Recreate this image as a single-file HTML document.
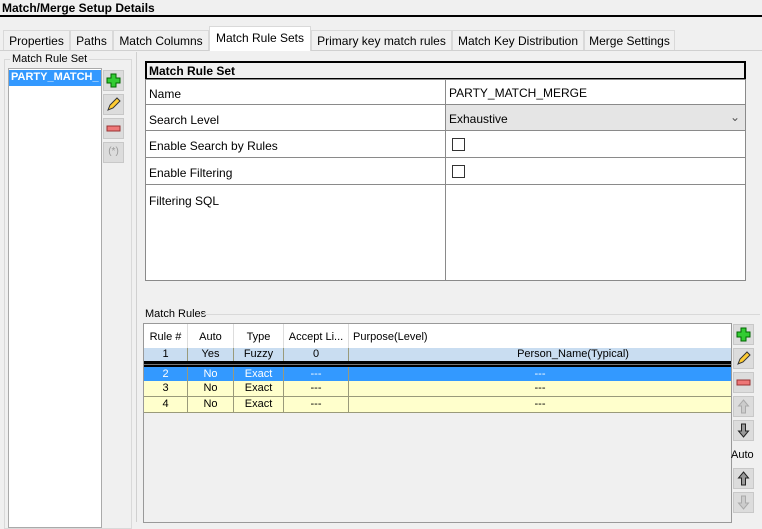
<!DOCTYPE html>
<html><head><style>
*{box-sizing:border-box;margin:0;padding:0}
body{width:762px;height:522px;background:#f0f0f0;font-family:"Liberation Sans",sans-serif;font-size:12px;color:#000;position:relative;overflow:hidden}
.a{position:absolute}
.tab{position:absolute;top:30px;height:20px;border:1px solid #d9d9d9;border-bottom:none;background:#f0f0f0;font-size:12px;padding:3px 0 0 0;text-align:center}
.cell{position:absolute;border:1px solid #8a8a8a;background:#fff;padding:4px 3px;font-size:12px}
.btn{position:absolute;width:21px;height:21px;background:#dcdcdc;border:1px solid #c8c8c8}
.tr{position:absolute;left:144px;width:587px;font-size:11px}
.tr div{position:absolute;top:0;height:100%;text-align:center;border-right:1px solid #9a9a7a}
.cb{position:absolute;width:13px;height:13px;border:1px solid #333;background:#fff}
</style></head><body>
<div class="a" style="left:0;top:0;width:762px;height:17px;border-bottom:2px solid #000;font-weight:bold;font-size:12px;padding:1px 2px">Match/Merge Setup Details</div>
<div class="a" style="left:0;top:50px;width:762px;height:1px;background:#d0d0d0"></div>
<div class="tab" style="left:3px;width:67px">Properties</div>
<div class="tab" style="left:70px;width:43px">Paths</div>
<div class="tab" style="left:113px;width:96px">Match Columns</div>
<div class="tab" style="left:209px;top:26px;height:25px;width:102px;background:#fff;padding-top:4px">Match Rule Sets</div>
<div class="tab" style="left:311px;width:141px">Primary key match rules</div>
<div class="tab" style="left:452px;width:132px">Match Key Distribution</div>
<div class="tab" style="left:584px;width:91px">Merge Settings</div>
<div class="a" style="left:4px;top:59px;width:128px;height:470px;border:1px solid #d9d9d9"></div>
<div class="a" style="left:10px;top:53px;padding:0 2px;background:#f0f0f0;font-size:11px">Match Rule Set</div>
<div class="a" style="left:8px;top:68px;width:94px;height:460px;background:#fff;border:1px solid #aaa"></div>
<div class="a" style="left:9px;top:70px;width:92px;height:16px;background:#3399ff;color:#fff;font-weight:bold;font-size:11px;padding:1px 2px;overflow:hidden;white-space:nowrap">PARTY_MATCH_</div>
<div class="btn" style="left:103px;top:70px"><svg width="19" height="19"><path d="M7 3h5v4h4v5h-4v4H7v-4H3V7h4z" fill="#3c3" stroke="#060" stroke-width="1"/></svg></div>
<div class="btn" style="left:103px;top:94px"><svg width="19" height="19"><path d="M4 15l2-5 7-7 3 3-7 7z" fill="#fc3" stroke="#333"/></svg></div>
<div class="btn" style="left:103px;top:118px"><svg width="19" height="19"><rect x="3" y="7" width="13" height="5" fill="#e77" stroke="#933"/></svg></div>
<div class="btn" style="left:103px;top:142px;color:#999;font-size:10px;text-align:center;padding-top:3px">(*)</div>
<div class="a" style="left:136px;top:52px;width:1px;height:470px;background:#d0d0d0"></div>
<div class="cell" style="left:145px;top:61px;width:601px;height:18px;border:2px solid #000;border-bottom:1px solid #000;background:#f0f0f0;font-weight:bold;padding:1px 2px">Match Rule Set</div>
<div class="cell" style="left:145px;top:79px;width:301px;height:26px;padding-top:7px">Name</div>
<div class="cell" style="left:445px;top:79px;width:301px;height:26px;padding-top:6px">PARTY_MATCH_MERGE</div>
<div class="cell" style="left:145px;top:104px;width:301px;height:27px;padding-top:8px">Search Level</div>
<div class="cell" style="left:445px;top:104px;width:301px;height:27px;background:#e5e5e5;padding-top:7px">Exhaustive<span style="position:absolute;right:5px;top:5px;color:#555">&#8964;</span></div>
<div class="cell" style="left:145px;top:130px;width:301px;height:28px;padding-top:8px">Enable Search by Rules</div>
<div class="cell" style="left:445px;top:130px;width:301px;height:28px"><div class="cb" style="left:6px;top:7px"></div></div>
<div class="cell" style="left:145px;top:157px;width:301px;height:28px;padding-top:8px">Enable Filtering</div>
<div class="cell" style="left:445px;top:157px;width:301px;height:28px"><div class="cb" style="left:6px;top:7px"></div></div>
<div class="cell" style="left:145px;top:184px;width:301px;height:97px;padding-top:9px">Filtering SQL</div>
<div class="cell" style="left:445px;top:184px;width:301px;height:97px"></div>
<div class="a" style="left:145px;top:308px;font-size:11px">Match Rules</div>
<div class="a" style="left:200px;top:314px;width:560px;height:1px;background:#d9d9d9"></div>
<div class="a" style="left:143px;top:323px;width:589px;height:200px;background:#f0f0f0;border:1px solid #999"></div>
<div class="tr" style="top:324px;height:24px;background:#fff;text-align:left"><div style="left:0;width:44px;border-color:#ddd;padding-top:7px">Rule #</div><div style="left:44px;width:46px;border-color:#ddd;padding-top:7px">Auto</div><div style="left:90px;width:50px;border-color:#ddd;padding-top:7px">Type</div><div style="left:140px;width:65px;border-color:#ddd;padding-top:7px">Accept Li...</div><div style="left:205px;width:382px;border:none;text-align:left;padding:7px 4px">Purpose(Level)</div></div>
<div class="tr" style="top:348px;height:13px;background:#c9ddf1"><div style="left:0;width:44px">1</div><div style="left:44px;width:46px">Yes</div><div style="left:90px;width:50px">Fuzzy</div><div style="left:140px;width:65px">0</div><div style="left:205px;width:382px;border:none;padding-left:66px">Person_Name(Typical)</div></div>
<div class="a" style="left:144px;top:361px;width:587px;height:6px;background:#000;border-top:1px solid #000"><div style="height:1px;margin-top:2px;background:#777"></div></div>
<div class="tr" style="top:367px;height:14px;background:#3399ff;color:#fff;padding-top:1px"><div style="left:0;width:44px;padding-top:1px">2</div><div style="left:44px;width:46px;padding-top:1px">No</div><div style="left:90px;width:50px;padding-top:1px">Exact</div><div style="left:140px;width:65px;padding-top:1px">---</div><div style="left:205px;width:382px;border:none;padding-top:1px">---</div></div>
<div class="tr" style="top:381px;height:16px;background:#ffffcc;border-bottom:1px solid #9a9a7a"><div style="left:0;width:44px;padding-top:1px">3</div><div style="left:44px;width:46px;padding-top:1px">No</div><div style="left:90px;width:50px;padding-top:1px">Exact</div><div style="left:140px;width:65px;padding-top:1px">---</div><div style="left:205px;width:382px;border:none;padding-top:1px">---</div></div>
<div class="tr" style="top:397px;height:16px;background:#ffffcc;border-bottom:1px solid #9a9a7a"><div style="left:0;width:44px;padding-top:1px">4</div><div style="left:44px;width:46px;padding-top:1px">No</div><div style="left:90px;width:50px;padding-top:1px">Exact</div><div style="left:140px;width:65px;padding-top:1px">---</div><div style="left:205px;width:382px;border:none;padding-top:1px">---</div></div>
<div class="btn" style="left:733px;top:324px"><svg width="19" height="19"><path d="M7 3h5v4h4v5h-4v4H7v-4H3V7h4z" fill="#3c3" stroke="#060"/></svg></div>
<div class="btn" style="left:733px;top:348px"><svg width="19" height="19"><path d="M4 15l2-5 7-7 3 3-7 7z" fill="#fc3" stroke="#333"/></svg></div>
<div class="btn" style="left:733px;top:372px"><svg width="19" height="19"><rect x="3" y="7" width="13" height="5" fill="#e77" stroke="#933"/></svg></div>
<div class="btn" style="left:733px;top:396px"><svg width="19" height="19"><path d="M9.5 3l5 6h-3v7h-4V9h-3z" fill="#ccc" stroke="#aaa"/></svg></div>
<div class="btn" style="left:733px;top:420px"><svg width="19" height="19"><path d="M9.5 16l5-6h-3V3h-4v7h-3z" fill="#999" stroke="#222"/></svg></div>
<div class="a" style="left:731px;top:449px;font-size:11px">Auto</div>
<div class="btn" style="left:733px;top:468px"><svg width="19" height="19"><path d="M9.5 3l5 6h-3v7h-4V9h-3z" fill="#999" stroke="#222"/></svg></div>
<div class="btn" style="left:733px;top:492px"><svg width="19" height="19"><path d="M9.5 16l5-6h-3V3h-4v7h-3z" fill="#ccc" stroke="#aaa"/></svg></div>
</body></html>
